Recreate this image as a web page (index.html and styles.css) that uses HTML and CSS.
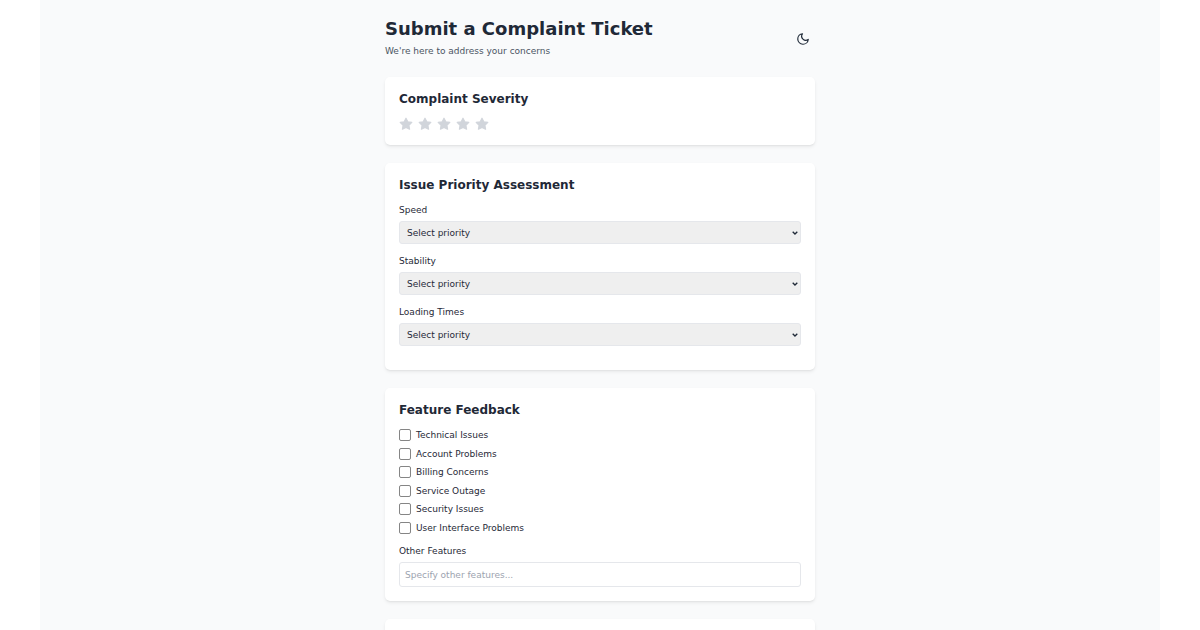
FILE: index.html
```html
<!DOCTYPE html>
<html lang="en">
<head>
    <meta charset="UTF-8">
    <meta name="viewport" content="width=device-width, initial-scale=1.0">
    <title>Submit a Complaint Ticket</title>
    <link rel="stylesheet" href="styles.css">
</head>
<body>
    <svg class="sprite" aria-hidden="true">
        <symbol id="star" viewBox="0 0 24 24">
            <path d="M12 2l3.09 6.26L22 9.27l-5 4.87 1.18 6.88L12 17.77l-6.18 3.25L7 14.14 2 9.27l6.91-1.01L12 2z"/>
        </symbol>
    </svg>

    <div class="page">
        <main class="container">
            <header class="header">
                <div>
                    <h1>Submit a Complaint Ticket</h1>
                    <p class="subtitle">We're here to address your concerns</p>
                </div>
                <button type="button" class="theme-toggle" aria-label="Toggle dark mode">
                    <svg viewBox="0 0 24 24"><path d="M21 12.79A9 9 0 1 1 11.21 3 7 7 0 0 0 21 12.79z"/></svg>
                </button>
            </header>

            <form class="form">
                <section class="card">
                    <h2>Complaint Severity</h2>
                    <div class="stars">
                        <button type="button" class="star" aria-label="1 star"><svg><use href="#star"/></svg></button>
                        <button type="button" class="star" aria-label="2 stars"><svg><use href="#star"/></svg></button>
                        <button type="button" class="star" aria-label="3 stars"><svg><use href="#star"/></svg></button>
                        <button type="button" class="star" aria-label="4 stars"><svg><use href="#star"/></svg></button>
                        <button type="button" class="star" aria-label="5 stars"><svg><use href="#star"/></svg></button>
                    </div>
                </section>

                <section class="card">
                    <h2>Issue Priority Assessment</h2>
                    <div class="field">
                        <label for="speed">Speed</label>
                        <select id="speed">
                            <option>Select priority</option>
                        </select>
                    </div>
                    <div class="field">
                        <label for="stability">Stability</label>
                        <select id="stability">
                            <option>Select priority</option>
                        </select>
                    </div>
                    <div class="field">
                        <label for="loading">Loading Times</label>
                        <select id="loading">
                            <option>Select priority</option>
                        </select>
                    </div>
                </section>

                <section class="card">
                    <h2>Feature Feedback</h2>
                    <div class="checks">
                        <label class="check"><input type="checkbox">Technical Issues</label>
                        <label class="check"><input type="checkbox">Account Problems</label>
                        <label class="check"><input type="checkbox">Billing Concerns</label>
                        <label class="check"><input type="checkbox">Service Outage</label>
                        <label class="check"><input type="checkbox">Security Issues</label>
                        <label class="check"><input type="checkbox">User Interface Problems</label>
                    </div>
                    <label for="other">Other Features</label>
                    <input type="text" id="other" class="text-input" placeholder="Specify other features...">
                </section>

                <section class="card"></section>
            </form>
        </main>
    </div>
</body>
</html>
```

FILE: styles.css
```css
* {
    box-sizing: border-box;
}

body {
    margin: 0;
    background-color: #fff;
    color: #1f2937;
    font-family: "DejaVu Sans", sans-serif;
    font-size: 9px;
    line-height: 14px;
}

button,
input,
select {
    font: inherit;
    color: inherit;
}

button {
    border: none;
    background: none;
    cursor: pointer;
}

h1,
h2,
p {
    margin: 0;
}

.sprite {
    display: none;
}

.page {
    max-width: 1120px;
    min-height: 100vh;
    margin: 0 auto;
    padding: 19px;
    background-color: #f9fafb;
}

.container {
    max-width: 430px;
    margin: 0 auto;
}

/* Header */
.header {
    display: flex;
    justify-content: space-between;
    align-items: center;
    margin-bottom: 19px;
}

h1 {
    font-size: 18px;
    line-height: 20px;
    margin-bottom: 5px;
}

.subtitle {
    color: #4b5563;
}

.theme-toggle {
    padding: 5px;
}

.theme-toggle svg {
    display: block;
    width: 14px;
    height: 14px;
    fill: none;
    stroke: #1f2937;
    stroke-width: 2;
    stroke-linecap: round;
    stroke-linejoin: round;
}

/* Cards */
.form {
    display: flex;
    flex-direction: column;
    gap: 18px;
}

.card {
    padding: 14px;
    background-color: #fff;
    border-radius: 5px;
    box-shadow: 0 2px 4px -1px rgba(0, 0, 0, 0.1), 0 1px 2px -1px rgba(0, 0, 0, 0.1);
}

h2 {
    font-size: 12px;
    line-height: 17px;
    margin-bottom: 9px;
}

.stars {
    display: flex;
    gap: 5px;
}

.star {
    padding: 0;
}

.star svg {
    display: block;
    width: 14px;
    height: 14px;
    fill: #d1d5db;
    stroke: #d1d5db;
    stroke-width: 2;
    stroke-linejoin: round;
}

/* Fields */
.field {
    margin-bottom: 10px;
}

label {
    display: block;
    margin-bottom: 4px;
}

select {
    display: block;
    width: 100%;
    height: 23px;
    padding: 0 7px;
    border: 1px solid #e5e7eb;
    border-radius: 3px;
    appearance: none;
    background: #efefef url("data:image/svg+xml,%3Csvg xmlns='http://www.w3.org/2000/svg' viewBox='0 0 6 4'%3E%3Cpath d='M.7.7 3 3 5.3.7' fill='none' stroke='%231f2937' stroke-width='1.3'/%3E%3C/svg%3E") no-repeat right 2px center / 6px 4px;
}

.checks {
    display: grid;
    align-content: space-between;
    min-height: 107px;
    margin-bottom: 9px;
}

.check {
    display: flex;
    align-items: center;
    gap: 5px;
    margin: 0;
}

.check input {
    width: 12px;
    height: 12px;
    margin: 0;
    border: 1px solid #858585;
    border-radius: 2px;
    background-color: #fff;
    appearance: none;
}

.check input:checked {
    border-color: #2563eb;
    background-color: #2563eb;
}

.text-input {
    display: block;
    width: 100%;
    height: 25px;
    padding: 0 5px;
    border: 1px solid #e5e7eb;
    border-radius: 3px;
}

.text-input::placeholder {
    color: #9ca3af;
}
```
